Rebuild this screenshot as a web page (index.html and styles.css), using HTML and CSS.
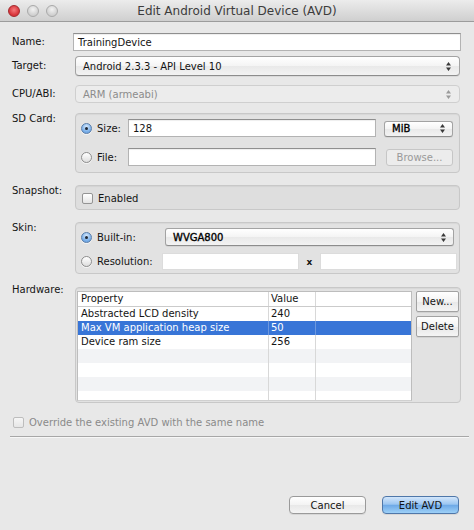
FILE: index.html
```html
<!DOCTYPE html>
<html>
<head>
<meta charset="utf-8">
<title>Edit Android Virtual Device (AVD)</title>
<link rel="stylesheet" href="styles.css">
</head>
<body>
<div class="window">
  <div class="titlebar">
    <div class="lights">
      <span class="light red"></span>
      <span class="light"></span>
      <span class="light"></span>
    </div>
    <div class="title">Edit Android Virtual Device (AVD)</div>
    <div></div>
  </div>

  <div class="content">
    <div class="row row-name">
      <span class="lbl">Name:</span>
      <div class="text-field name-field">TrainingDevice</div>
    </div>

    <div class="row row-target">
      <span class="lbl">Target:</span>
      <div class="popup big">
        <span>Android 2.3.3 - API Level 10</span>
        <svg class="updown" width="5" height="9" viewBox="0 0 5 9"><path d="M2.5 0 L5 3.5 H0Z M2.5 9 L0 5.5 H5Z" fill="#3a3a3a"/></svg>
      </div>
    </div>

    <div class="row row-cpu">
      <span class="lbl">CPU/ABI:</span>
      <div class="popup disabled">
        <span>ARM (armeabi)</span>
        <svg class="updown" width="5" height="9" viewBox="0 0 5 9"><path d="M2.5 0 L5 3.5 H0Z M2.5 9 L0 5.5 H5Z" fill="#9a9a9a"/></svg>
      </div>
    </div>

    <div class="row row-group row-sd">
      <span class="lbl">SD Card:</span>
      <div class="group sd-group">
        <div class="opt"><span class="radio on"></span><span>Size:</span></div>
        <div class="text-field">128</div>
        <div class="popup small">
          <span class="strong">MiB</span>
          <svg class="updown" width="5" height="9" viewBox="0 0 5 9"><path d="M2.5 0 L5 3.5 H0Z M2.5 9 L0 5.5 H5Z" fill="#3a3a3a"/></svg>
        </div>
        <div class="opt"><span class="radio"></span><span>File:</span></div>
        <div class="text-field"></div>
        <div class="btn disabled browse">Browse...</div>
      </div>
    </div>

    <div class="row row-group row-snap">
      <span class="lbl">Snapshot:</span>
      <div class="group snap-group">
        <span class="check"></span><span>Enabled</span>
      </div>
    </div>

    <div class="row row-group row-skin">
      <span class="lbl">Skin:</span>
      <div class="group skin-group">
        <div class="opt"><span class="radio on"></span><span>Built-in:</span></div>
        <div class="popup small skin-popup">
          <span class="strong">WVGA800</span>
          <svg class="updown" width="5" height="9" viewBox="0 0 5 9"><path d="M2.5 0 L5 3.5 H0Z M2.5 9 L0 5.5 H5Z" fill="#3a3a3a"/></svg>
        </div>
        <div class="opt"><span class="radio"></span><span>Resolution:</span></div>
        <div class="res">
          <div class="text-field"></div>
          <span class="times">x</span>
          <div class="text-field"></div>
        </div>
      </div>
    </div>

    <div class="row row-group row-hw">
      <span class="lbl hw-lbl">Hardware:</span>
      <div class="group hw-group">
        <div class="table">
          <div class="tr thead"><span>Property</span><span>Value</span><span></span></div>
          <div class="tr"><span>Abstracted LCD density</span><span>240</span><span></span></div>
          <div class="tr sel"><span>Max VM application heap size</span><span>50</span><span></span></div>
          <div class="tr"><span>Device ram size</span><span>256</span><span></span></div>
          <div class="tr alt"><span></span><span></span><span></span></div>
          <div class="tr"><span></span><span></span><span></span></div>
          <div class="tr alt"><span></span><span></span><span></span></div>
          <div class="tr"><span></span><span></span><span></span></div>
        </div>
        <div class="side">
          <div class="btn sbtn">New...</div>
          <div class="btn sbtn">Delete</div>
        </div>
      </div>
    </div>

    <div class="override"><span class="check dim"></span><span>Override the existing AVD with the same name</span></div>

    <div class="sep"></div>

    <div class="actions">
      <div class="btn push">Cancel</div>
      <div class="btn push default">Edit AVD</div>
    </div>
  </div>
</div>
</body>
</html>
```

FILE: styles.css
```css
* { box-sizing: border-box; }

body {
  margin: 0;
  width: 474px;
  height: 530px;
  overflow: hidden;
  font-family: "DejaVu Sans", "Liberation Sans", sans-serif;
  font-size: 10px;
  color: #141414;
  background: #e8e8e8;
}

.window {
  width: 474px;
  height: 530px;
  display: flex;
  flex-direction: column;
  background: #e8e8e8;
}

/* title bar */
.titlebar {
  flex: none;
  height: 22px;
  display: grid;
  grid-template-columns: 1fr auto 1fr;
  align-items: center;
  background: linear-gradient(#ececec, #cfcfcf);
  border-bottom: 1px solid #9c9c9c;
}
.lights {
  display: flex;
  gap: 7px;
  padding-left: 8px;
}
.light {
  width: 12px;
  height: 12px;
  border-radius: 50%;
  background: radial-gradient(circle at 50% 35%, #f2f2f2, #cfcfcf 70%);
  border: 1px solid #a9a9a9;
}
.light.red {
  background: radial-gradient(circle at 50% 40%, #f57a7c, #d8343a 65%);
  border-color: #a3282c;
}
.title {
  font-size: 12px;
  color: #3c3c3c;
}

/* content */
.content {
  flex: 1;
  display: flex;
  flex-direction: column;
  padding: 11px 14px 0 12px;
}
.row {
  display: flex;
  align-items: center;
}
.lbl {
  width: 63px;
  flex: none;
  line-height: 12px;
}
.row-group { align-items: flex-start; }
.row-target { margin-top: 5px; }
.row-cpu { margin-top: 9px; }
.row-sd { margin-top: 10px; }
.row-snap { margin-top: 12px; }
.row-skin { margin-top: 12px; }
.row-hw { margin-top: 13px; }
.hw-lbl { margin-top: -3px; }

/* controls */
.text-field {
  height: 18px;
  background: #fff;
  border: 1px solid #b3b3b3;
  border-top-color: #8f8f8f;
  box-shadow: inset 0 1px 1px rgba(0, 0, 0, 0.07);
  padding: 0 4px;
  display: flex;
  align-items: center;
}
.name-field {
  flex: 1;
  margin: 0 -1px 0 -2px;
  padding-left: 4px;
}

.popup {
  height: 20px;
  flex: 1;
  display: flex;
  align-items: center;
  justify-content: space-between;
  padding: 0 8px 0 7px;
  border: 1px solid #a3a3a3;
  border-bottom-color: #8d8d8d;
  border-radius: 4px;
  background: linear-gradient(#ffffff, #f4f4f4 50%, #e9e9e9 51%, #f3f3f3);
  box-shadow: 0 1px 0 rgba(0, 0, 0, 0.06);
}
.popup.disabled {
  height: 18px;
  color: #8b8b8b;
  background: #ececec;
  border-color: #cfcfcf;
  box-shadow: none;
}
.popup.small {
  height: 17px;
  padding: 0 7px 0 7px;
  border-radius: 3px;
}
.strong {
  color: #000;
  -webkit-text-stroke: 0.35px #000;
}
.updown { flex: none; }

.group {
  flex: 1;
  background: #e2e2e2;
  border: 1px solid #c8c8c8;
  border-radius: 4px;
  box-shadow: inset 0 1px 1px rgba(0, 0, 0, 0.05);
}

.sd-group {
  display: grid;
  grid-template-columns: 39px 1fr 69px;
  grid-template-rows: 18px 18px;
  column-gap: 8px;
  row-gap: 11px;
  padding: 5px 6px 6px 5px;
  align-items: center;
}
.sd-group .popup.small { height: 16px; margin-top: 1px; }
.browse { margin-left: 2px; height: 17px; }

.opt {
  display: flex;
  align-items: center;
  gap: 5px;
}
.radio {
  width: 11px;
  height: 11px;
  flex: none;
  border-radius: 50%;
  border: 1px solid #8e8e8e;
  background: linear-gradient(#ffffff, #dedede);
  box-shadow: 0 1px 0 rgba(255, 255, 255, 0.6);
  display: flex;
  align-items: center;
  justify-content: center;
}
.radio.on {
  border-color: #5a7eaa;
  background: radial-gradient(circle at 50% 30%, #d6e8fb, #7eb2ea 60%, #5d98dc);
}
.radio.on::after {
  content: "";
  width: 3px;
  height: 3px;
  border-radius: 50%;
  background: #1d2633;
}
.check {
  width: 11px;
  height: 11px;
  flex: none;
  border-radius: 2px;
  border: 1px solid #949494;
  background: linear-gradient(#ffffff, #e4e4e4);
}
.check.dim {
  border-color: #bdbdbd;
  background: linear-gradient(#f6f6f6, #e6e6e6);
}

.snap-group {
  height: 25px;
  display: flex;
  align-items: center;
  gap: 5px;
  padding-left: 6px;
  padding-top: 2px;
  background: #dedede;
}

.skin-group {
  display: grid;
  grid-template-columns: 81px 1fr;
  grid-template-rows: 18px 17px;
  row-gap: 7px;
  padding: 5px 2px 3px 5px;
  align-items: center;
}
.skin-popup {
  height: 18px !important;
  margin: 0 3px;
}
.res {
  display: grid;
  grid-template-columns: 137px 21px 137px;
  align-items: center;
}
.res .text-field {
  height: 17px;
  border-color: #dcdcdc;
  box-shadow: none;
}
.times {
  text-align: center;
  font-weight: bold;
  font-size: 9px;
}

.hw-group {
  display: flex;
  gap: 4px;
  padding: 3px 1px 1px 1px;
  height: 116px;
}
.table {
  width: 335px;
  height: 110px;
  overflow: hidden;
  background: #fff;
  border: 1px solid #bdbdbd;
  border-bottom-color: #d0d0d0;
}
.tr {
  display: grid;
  grid-template-columns: 191px 47px 1fr;
  height: 14px;
  line-height: 14px;
  background: #fff;
}
.tr span {
  border-right: 1px solid #d8d8d8;
  padding-left: 2px;
  white-space: nowrap;
  overflow: hidden;
}
.tr span:first-child { padding-left: 3px; }
.tr span:last-child { border-right: none; }
.thead {
  height: 15px;
  border-bottom: 1px solid #cbcbcb;
}
.tr.alt { background: #f2f3f5; }
.tr.sel {
  background: #3875d7;
  color: #fff;
}
.tr.sel span { border-right-color: #6d98de; }

.side {
  display: flex;
  flex-direction: column;
  gap: 4px;
}
.btn {
  display: flex;
  align-items: center;
  justify-content: center;
  border: 1px solid #a2a2a2;
  border-radius: 3px;
  background: linear-gradient(#ffffff, #f3f3f3 50%, #e8e8e8 51%, #f4f4f4);
  box-shadow: 0 1px 0 rgba(0, 0, 0, 0.07);
}
.btn.disabled {
  color: #9a9a9a;
  border-color: #c6c6c6;
  background: #ececec;
  box-shadow: none;
}
.sbtn {
  width: 43px;
  height: 21px;
  border-radius: 2px;
}

.override {
  margin-top: 13px;
  margin-left: 1px;
  height: 12px;
  display: flex;
  align-items: center;
  gap: 5px;
  color: #8a8a8a;
}

.sep {
  margin: 8px -9px 0 -2px;
  height: 2px;
  border-top: 1px solid #a7a7a7;
  border-bottom: 1px solid #f7f7f7;
}

.actions {
  margin-top: 58px;
  display: flex;
  justify-content: flex-end;
  gap: 16px;
  margin-right: 1px;
}
.push {
  width: 77px;
  height: 18px;
  border-radius: 4px;
  border-color: #9a9a9a;
}
.push.default {
  border-color: #4f77a9;
  background: linear-gradient(#d3e6fb, #9cc6f1 45%, #6ea9e7 52%, #9dd0f7);
}
```
